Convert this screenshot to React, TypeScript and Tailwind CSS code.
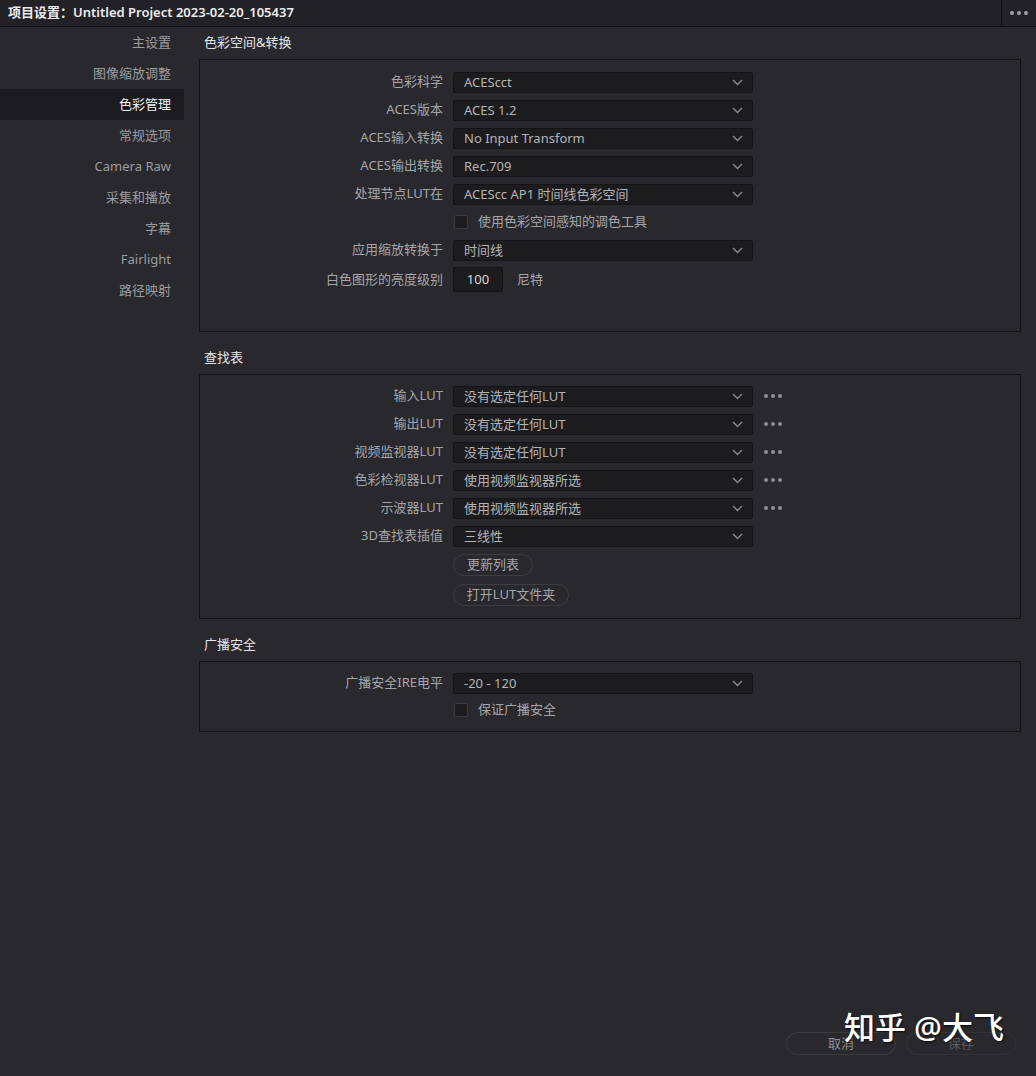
import React from "react";

const FONT = '"Noto Sans", "Noto Sans CJK SC", sans-serif';

function Chevron() {
  return (
    <svg width="11" height="7" viewBox="0 0 11 7" className="shrink-0">
      <path d="M1 1 L5.5 5.5 L10 1" fill="none" stroke="#8c8c90" strokeWidth="1.4" />
    </svg>
  );
}

function Dots({ color = "#8e8e92" }: { color?: string }) {
  return (
    <div className="flex items-center gap-[3px]">
      <span className="w-[4px] h-[4px] rounded-full" style={{ background: color }} />
      <span className="w-[4px] h-[4px] rounded-full" style={{ background: color }} />
      <span className="w-[4px] h-[4px] rounded-full" style={{ background: color }} />
    </div>
  );
}

function Select({ value }: { value: string }) {
  return (
    <div className="w-[300px] h-[21px] bg-[#1c1c1f] border border-[#141416] rounded-[2px] flex items-center justify-between pl-[10px] pr-[9px] text-[13px] text-[#b4b4b6]">
      <span className="leading-none">{value}</span>
      <Chevron />
    </div>
  );
}

function Row({ label, children, h = "h-[28px]", dots = false }: { label?: string; children: React.ReactNode; h?: string; dots?: boolean }) {
  return (
    <div className={`flex items-center ${h}`}>
      <div className="w-[253px] pr-[10px] text-right text-[13px] text-[#a6a6a9] shrink-0">{label}</div>
      {children}
      {dots && (
        <div className="ml-[11px]">
          <Dots />
        </div>
      )}
    </div>
  );
}

function Checkbox({ label }: { label: string }) {
  return (
    <div className="flex items-center">
      <div className="w-[14px] h-[14px] bg-[#1c1c1f] border border-[#3a3a3f] rounded-[2px] ml-[1px]" />
      <span className="ml-[10px] text-[13px] text-[#a6a6a9]">{label}</span>
    </div>
  );
}

function PillButton({ label, w }: { label: string; w: string }) {
  return (
    <div className={`${w} h-[22px] rounded-full border border-[#3c3c41] flex items-center justify-center text-[13px] text-[#a6a6a9]`}>
      {label}
    </div>
  );
}

function SectionTitle({ title, first = false }: { title: string; first?: boolean }) {
  return (
    <div className={`h-[32px] flex items-center pl-[5px] text-[13px] text-[#e4e4e6] ${first ? "" : "mt-[10px]"}`}>
      {title}
    </div>
  );
}

const sidebar = ["主设置", "图像缩放调整", "色彩管理", "常规选项", "Camera Raw", "采集和播放", "字幕", "Fairlight", "路径映射"];

export default function App() {
  return (
    <div className="relative w-[1036px] h-[1076px] bg-[#28282d] flex flex-col overflow-hidden" style={{ fontFamily: FONT }}>
      {/* title bar */}
      <div className="h-[27px] shrink-0 bg-[#222226] border-b border-[#0f0f11] flex">
        <div className="flex-1 flex items-center pl-[8px] text-[13px] font-semibold text-[#ececee]">
          项目设置：Untitled Project 2023-02-20_105437
        </div>
        <div className="w-[35px] border-l border-[#0f0f11] flex items-center justify-center">
          <Dots color="#a0a0a4" />
        </div>
      </div>

      <div className="flex flex-1">
        {/* sidebar */}
        <div className="w-[184px] shrink-0 flex flex-col">
          {sidebar.map((s) => {
            const sel = s === "色彩管理";
            return (
              <div
                key={s}
                className={`h-[31px] flex items-center justify-end pr-[13px] text-[13px] ${sel ? "bg-[#1c1c20] text-[#f2f2f4]" : "text-[#9c9ca0]"}`}
              >
                {s}
              </div>
            );
          })}
        </div>

        {/* content */}
        <div className="flex-1 pl-[15px] pr-[15px] flex flex-col">
          <SectionTitle title="色彩空间&转换" first />
          <div className="h-[273px] border border-[#111113] pt-[8px]">
            <Row label="色彩科学"><Select value="ACEScct" /></Row>
            <Row label="ACES版本"><Select value="ACES 1.2" /></Row>
            <Row label="ACES输入转换"><Select value="No Input Transform" /></Row>
            <Row label="ACES输出转换"><Select value="Rec.709" /></Row>
            <Row label="处理节点LUT在"><Select value="ACEScc AP1 时间线色彩空间" /></Row>
            <Row><Checkbox label="使用色彩空间感知的调色工具" /></Row>
            <Row label="应用缩放转换于"><Select value="时间线" /></Row>
            <Row label="白色图形的亮度级别" h="h-[31px]">
              <div className="w-[50px] h-[25px] bg-[#1c1c1f] border border-[#141416] rounded-[2px] flex items-center justify-center text-[13px] text-[#d8d8da]">100</div>
              <span className="ml-[14px] text-[13px] text-[#a6a6a9]">尼特</span>
            </Row>
          </div>

          <SectionTitle title="查找表" />
          <div className="h-[245px] border border-[#111113] pt-[7px]">
            <Row label="输入LUT" dots><Select value="没有选定任何LUT" /></Row>
            <Row label="输出LUT" dots><Select value="没有选定任何LUT" /></Row>
            <Row label="视频监视器LUT" dots><Select value="没有选定任何LUT" /></Row>
            <Row label="色彩检视器LUT" dots><Select value="使用视频监视器所选" /></Row>
            <Row label="示波器LUT" dots><Select value="使用视频监视器所选" /></Row>
            <Row label="3D查找表插值"><Select value="三线性" /></Row>
            <Row h="h-[30px]"><PillButton label="更新列表" w="w-[80px]" /></Row>
            <Row h="h-[30px]"><PillButton label="打开LUT文件夹" w="w-[116px]" /></Row>
          </div>

          <SectionTitle title="广播安全" />
          <div className="h-[71px] border border-[#111113] pt-[7px]">
            <Row label="广播安全IRE电平"><Select value="-20 - 120" /></Row>
            <Row h="h-[26px]"><Checkbox label="保证广播安全" /></Row>
          </div>
        </div>
      </div>

      {/* bottom buttons */}
      <div className="h-[44px] shrink-0 flex justify-end items-start gap-[10px] pr-[20px]">
        <div className="w-[110px] h-[23px] rounded-full border border-[#3a3a3f] flex items-center justify-center text-[13px] text-[#8e8e92]">取消</div>
        <div className="w-[110px] h-[23px] rounded-full border border-[#333338] flex items-center justify-center text-[13px] text-[#5a5a5e]">保存</div>
      </div>

      {/* watermark overlay */}
      <div
        className="absolute left-[844px] top-[1012px] text-[31px] font-medium text-white leading-none"
        style={{ textShadow: "1px 1px 2px rgba(0,0,0,0.8)" }}
      >
        知乎 @大飞
      </div>
    </div>
  );
}
